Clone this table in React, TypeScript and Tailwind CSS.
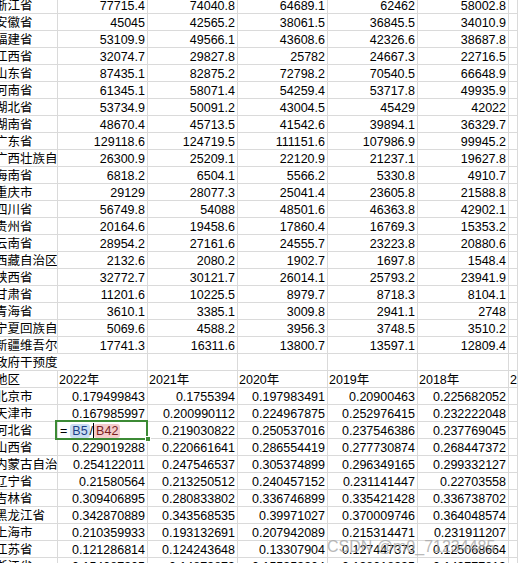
import React from "react";

const upper: string[][] = [
  ["浙江省", "77715.4", "74040.8", "64689.1", "62462", "58002.8"],
  ["安徽省", "45045", "42565.2", "38061.5", "36845.5", "34010.9"],
  ["福建省", "53109.9", "49566.1", "43608.6", "42326.6", "38687.8"],
  ["江西省", "32074.7", "29827.8", "25782", "24667.3", "22716.5"],
  ["山东省", "87435.1", "82875.2", "72798.2", "70540.5", "66648.9"],
  ["河南省", "61345.1", "58071.4", "54259.4", "53717.8", "49935.9"],
  ["湖北省", "53734.9", "50091.2", "43004.5", "45429", "42022"],
  ["湖南省", "48670.4", "45713.5", "41542.6", "39894.1", "36329.7"],
  ["广东省", "129118.6", "124719.5", "111151.6", "107986.9", "99945.2"],
  ["广西壮族自治区", "26300.9", "25209.1", "22120.9", "21237.1", "19627.8"],
  ["海南省", "6818.2", "6504.1", "5566.2", "5330.8", "4910.7"],
  ["重庆市", "29129", "28077.3", "25041.4", "23605.8", "21588.8"],
  ["四川省", "56749.8", "54088", "48501.6", "46363.8", "42902.1"],
  ["贵州省", "20164.6", "19458.6", "17860.4", "16769.3", "15353.2"],
  ["云南省", "28954.2", "27161.6", "24555.7", "23223.8", "20880.6"],
  ["西藏自治区", "2132.6", "2080.2", "1902.7", "1697.8", "1548.4"],
  ["陕西省", "32772.7", "30121.7", "26014.1", "25793.2", "23941.9"],
  ["甘肃省", "11201.6", "10225.5", "8979.7", "8718.3", "8104.1"],
  ["青海省", "3610.1", "3385.1", "3009.8", "2941.1", "2748"],
  ["宁夏回族自治区", "5069.6", "4588.2", "3956.3", "3748.5", "3510.2"],
  ["新疆维吾尔自治区", "17741.3", "16311.6", "13800.7", "13597.1", "12809.4"],
];

const lowerA: string[][] = [
  ["北京市", "0.179499843", "0.1755394", "0.197983491", "0.20900463", "0.225682052"],
  ["天津市", "0.167985997", "0.200990112", "0.224967875", "0.252976415", "0.232222048"],
];
const lowerB: string[][] = [
  ["山西省", "0.229019288", "0.220661641", "0.286554419", "0.277730874", "0.268447372"],
  ["内蒙古自治区", "0.254122011", "0.247546537", "0.305374899", "0.296349165", "0.299332127"],
  ["辽宁省", "0.21580564", "0.213250512", "0.240457152", "0.231141447", "0.22703558"],
  ["吉林省", "0.309406895", "0.280833802", "0.336746899", "0.335421428", "0.336738702"],
  ["黑龙江省", "0.342870889", "0.343568535", "0.39971027", "0.370009746", "0.364048574"],
  ["上海市", "0.210359933", "0.193132691", "0.207942089", "0.215314471", "0.231911207"],
  ["江苏省", "0.121286814", "0.124243648", "0.13307904", "0.127447373", "0.125068664"],
  ["浙江省", "0.154087305", "0.14873873", "0.155353304", "0.138018335", "0.149777813"],
];

const ROW = "grid grid-cols-[58px_90px_90px_90px_90px_91px_1fr]";
const CELL =
  "border-r border-b border-[#dadada] flex items-end overflow-hidden whitespace-nowrap leading-[14px]";
const NUM = CELL + " justify-end pr-[2px]";
const TXT = CELL + " pl-[1px]";

function NameCell({ name }: { name: string }) {
  return (
    <div className={CELL}>
      <span className="ml-[-5px]">{name}</span>
    </div>
  );
}

function DataRow({ r, h }: { r: string[]; h: string }) {
  return (
    <div className={ROW + " " + h}>
      <NameCell name={r[0]} />
      {r.slice(1).map((v, i) => (
        <div key={i} className={NUM}>
          {v}
        </div>
      ))}
      <div className={CELL}></div>
    </div>
  );
}

export default function App() {
  return (
    <div className="relative w-[518px] h-[563px] overflow-hidden bg-white text-black text-[12.5px] font-['Liberation_Sans','Noto_Sans_CJK_SC',sans-serif]">
      {upper.map((r, i) => (
        <DataRow key={"u" + i} r={r} h={i === 0 ? "h-[14px]" : "h-[17px]"} />
      ))}
      {/* 政府干预度 */}
      <div className={ROW + " h-[17px]"}>
        <div className="col-span-2 border-r border-b border-[#dadada] flex items-end overflow-hidden whitespace-nowrap leading-[14px]">
          <span className="ml-[-5px]">政府干预度</span>
        </div>
        <div className={CELL}></div>
        <div className={CELL}></div>
        <div className={CELL}></div>
        <div className={CELL}></div>
        <div className={CELL}></div>
      </div>
      {/* header */}
      <div className={ROW + " h-[17px]"}>
        <NameCell name="地区" />
        {["2022年", "2021年", "2020年", "2019年", "2018年", "2017年"].map((y) => (
          <div key={y} className={TXT}>
            {y}
          </div>
        ))}
      </div>
      {lowerA.map((r, i) => (
        <DataRow key={"a" + i} r={r} h="h-[17px]" />
      ))}
      {/* editing row */}
      <div className={ROW + " h-[17px]"}>
        <NameCell name="河北省" />
        <div className={CELL + " relative overflow-visible pl-[2px]"}>
          <span>=</span>
          <span className="ml-[3px] px-[2px] rounded-[3px] bg-[#c9dcf2] text-[#1c3f86]">B5</span>
          <span>/</span>
          <span className="w-px h-[15px] bg-black mb-[0px]"></span>
          <span className="px-[2px] rounded-[3px] bg-[#f5cccc] text-[#7a1f1f]">B42</span>
          <div className="absolute -left-[3px] -top-[2px] -right-[1px] -bottom-[2px] border-2 border-[#3c8a35]"></div>
          <div className="absolute -right-[4px] -bottom-[4px] w-[6px] h-[6px] bg-[#3c8a35] border border-white"></div>
        </div>
        {["0.219030822", "0.250537016", "0.237546386", "0.237769045"].map((v) => (
          <div key={v} className={NUM}>
            {v}
          </div>
        ))}
        <div className={CELL}></div>
      </div>
      {lowerB.map((r, i) => (
        <DataRow key={"b" + i} r={r} h="h-[17px]" />
      ))}
      <div className="absolute left-[327px] top-[538px] text-[16px] leading-[18px] text-[#a8a8a8] opacity-80 font-['Liberation_Sans',sans-serif] whitespace-nowrap pointer-events-none">
        CSDN @m0_71234485
      </div>
    </div>
  );
}
